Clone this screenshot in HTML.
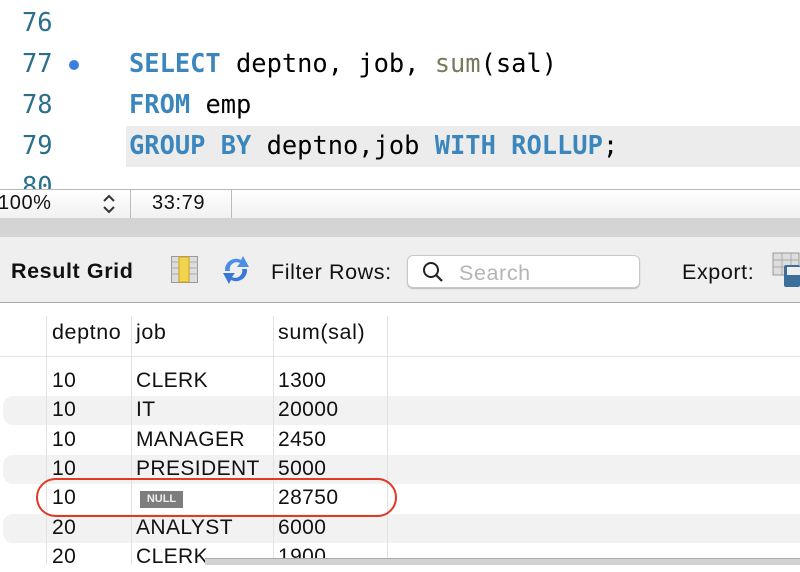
<!DOCTYPE html>
<html><head><style>
*{margin:0;padding:0;box-sizing:border-box}
body{width:800px;height:565px;overflow:hidden;background:#fff;position:relative;font-family:"Liberation Sans",sans-serif}
.ab{position:absolute}
.code{font-family:"DejaVu Sans Mono","Liberation Mono",monospace;font-size:25.4px;white-space:pre}
.ln{color:#2b6f8c;left:22px}
.kw{color:#3b87bd;font-weight:bold}
.t{font-size:21.5px;color:#111;white-space:pre;letter-spacing:0.6px}
.row{position:absolute;left:0;width:800px;height:29px}
.alt{background:#f2f2f2;border-radius:10px 0 0 10px;left:3px}
.cell{position:absolute;font-size:21px;color:#111;top:2px;letter-spacing:0.4px}
</style></head><body>
<div class="ab" style="left:126px;top:126px;width:674px;height:41px;background:#ececec"></div>
<div class="ab code ln" style="top:7px">76</div>
<div class="ab code ln" style="top:48px">77</div>
<div class="ab" style="left:69px;top:60px;width:10px;height:10px;border-radius:50%;background:#3d7fe0"></div>
<div class="ab code" style="left:129px;top:48px"><span class="kw">SELECT</span> deptno, job, <span style="color:#7a7a5c">sum</span>(sal)</div>
<div class="ab code ln" style="top:89px">78</div>
<div class="ab code" style="left:129px;top:89px"><span class="kw">FROM</span> emp</div>
<div class="ab code ln" style="top:130px">79</div>
<div class="ab code" style="left:129px;top:130px"><span class="kw">GROUP BY</span> deptno,job <span class="kw">WITH ROLLUP</span>;</div>
<div class="ab code ln" style="top:171px">80</div>
<div class="ab" style="left:0;top:189px;width:800px;height:29px;background:linear-gradient(#fff,#f1f1f1);border-top:1px solid #b8b8b8"></div>
<div class="ab t" style="left:-2px;top:192px;font-size:20px">100%</div>
<svg class="ab" style="left:100px;top:192px" width="18" height="24"><path d="M4 9 L9 4 L14 9 M4 15 L9 20 L14 15" fill="none" stroke="#333" stroke-width="2"/></svg>
<div class="ab" style="left:130px;top:190px;width:1px;height:28px;background:#bbb"></div>
<div class="ab t" style="left:152px;top:192px;font-size:20px">33:79</div>
<div class="ab" style="left:231px;top:190px;width:1px;height:28px;background:#bbb"></div>
<div class="ab" style="left:0;top:218px;width:800px;height:19px;background:#d4d4d4"></div>
<div class="ab" style="left:0;top:237px;width:800px;height:66px;background:#efefef;border-bottom:1px solid #a8a8a8"></div>
<div class="ab t" style="left:11px;top:259px;font-weight:bold">Result Grid</div>
<svg class="ab" style="left:171px;top:256px" width="27" height="27"><rect x="0.5" y="0.5" width="26" height="26" fill="#ddd" stroke="#999"/><g stroke="#aaa"><line x1="0" y1="6" x2="27" y2="6"/><line x1="0" y1="12" x2="27" y2="12"/><line x1="0" y1="18" x2="27" y2="18"/></g><rect x="8" y="1" width="10" height="25" fill="#f4d44c" stroke="#c9a020"/></svg>
<svg class="ab" style="left:219px;top:255px" width="34" height="30"><path d="M6 16 A11 11 0 0 1 22 5 L24 1 L30 12 L18 12 L21 8 A7 7 0 0 0 11 16 Z" fill="#4a8ee6"/><path d="M28 14 A11 11 0 0 1 12 25 L10 29 L4 18 L16 18 L13 22 A7 7 0 0 0 23 14 Z" fill="#3a78d8"/></svg>
<div class="ab t" style="left:271px;top:260px">Filter Rows:</div>
<div class="ab" style="left:407px;top:255px;width:233px;height:33px;background:#fff;border:1px solid #c8c8c8;border-radius:6px;box-shadow:0 1px 1px #bbb"></div>
<svg class="ab" style="left:422px;top:261px" width="22" height="22"><circle cx="9" cy="9" r="7" fill="none" stroke="#222" stroke-width="2"/><line x1="14" y1="14" x2="20" y2="20" stroke="#222" stroke-width="2.2"/></svg>
<div class="ab t" style="left:459px;top:261px;color:#b5b5b5">Search</div>
<div class="ab t" style="left:682px;top:260px">Export:</div>
<svg class="ab" style="left:772px;top:252px" width="28" height="36"><rect x="1" y="1" width="26" height="22" fill="#ddd" stroke="#999"/><g stroke="#aaa"><line x1="1" y1="8" x2="27" y2="8"/><line x1="1" y1="15" x2="27" y2="15"/><line x1="10" y1="1" x2="10" y2="23"/><line x1="19" y1="1" x2="19" y2="23"/></g><rect x="12" y="13" width="16" height="22" rx="2" fill="#3b6e98"/><rect x="15" y="15" width="13" height="8" fill="#eee"/></svg>
<div class="ab" style="left:0;top:356px;width:800px;height:1px;background:#e4e4e4"></div>
<div class="ab t" style="left:52px;top:320px">deptno</div>
<div class="ab t" style="left:136px;top:320px">job</div>
<div class="ab t" style="left:278px;top:320px">sum(sal)</div>
<div class="row" style="top:367px"><span class="cell" style="left:52px">10</span><span class="cell" style="left:136px">CLERK</span><span class="cell" style="left:278px">1300</span></div>
<div class="row alt" style="top:396px;left:3px"></div>
<div class="row" style="top:396px"><span class="cell" style="left:52px">10</span><span class="cell" style="left:136px">IT</span><span class="cell" style="left:278px">20000</span></div>
<div class="row" style="top:426px"><span class="cell" style="left:52px">10</span><span class="cell" style="left:136px">MANAGER</span><span class="cell" style="left:278px">2450</span></div>
<div class="row alt" style="top:455px;left:3px"></div>
<div class="row" style="top:455px"><span class="cell" style="left:52px">10</span><span class="cell" style="left:136px">PRESIDENT</span><span class="cell" style="left:278px">5000</span></div>
<div class="row" style="top:484px"><span class="cell" style="left:52px">10</span><span class="cell" style="left:278px">28750</span></div>
<div class="ab" style="left:140px;top:491px;width:43px;height:17px;background:#7d7d7d;color:#eee;font-size:11px;font-weight:bold;line-height:17px;text-align:center">NULL</div>
<div class="row alt" style="top:514px;left:3px"></div>
<div class="row" style="top:514px"><span class="cell" style="left:52px">20</span><span class="cell" style="left:136px">ANALYST</span><span class="cell" style="left:278px">6000</span></div>
<div class="row" style="top:543px"><span class="cell" style="left:52px">20</span><span class="cell" style="left:136px">CLERK</span><span class="cell" style="left:278px">1900</span></div>
<div class="ab" style="left:46px;top:316px;width:1px;height:249px;background:#e2e2e2"></div>
<div class="ab" style="left:131px;top:316px;width:1px;height:249px;background:#e2e2e2"></div>
<div class="ab" style="left:273px;top:316px;width:1px;height:249px;background:#e2e2e2"></div>
<div class="ab" style="left:387px;top:316px;width:1px;height:249px;background:#e2e2e2"></div>
<div class="ab" style="left:36px;top:478px;width:361px;height:39px;border:2.5px solid #e03a24;border-radius:20px"></div>
<div class="ab" style="left:205px;top:558px;width:595px;height:7px;background:#d2d2d2;border-top:1px solid #aaa"></div>
</body></html>
